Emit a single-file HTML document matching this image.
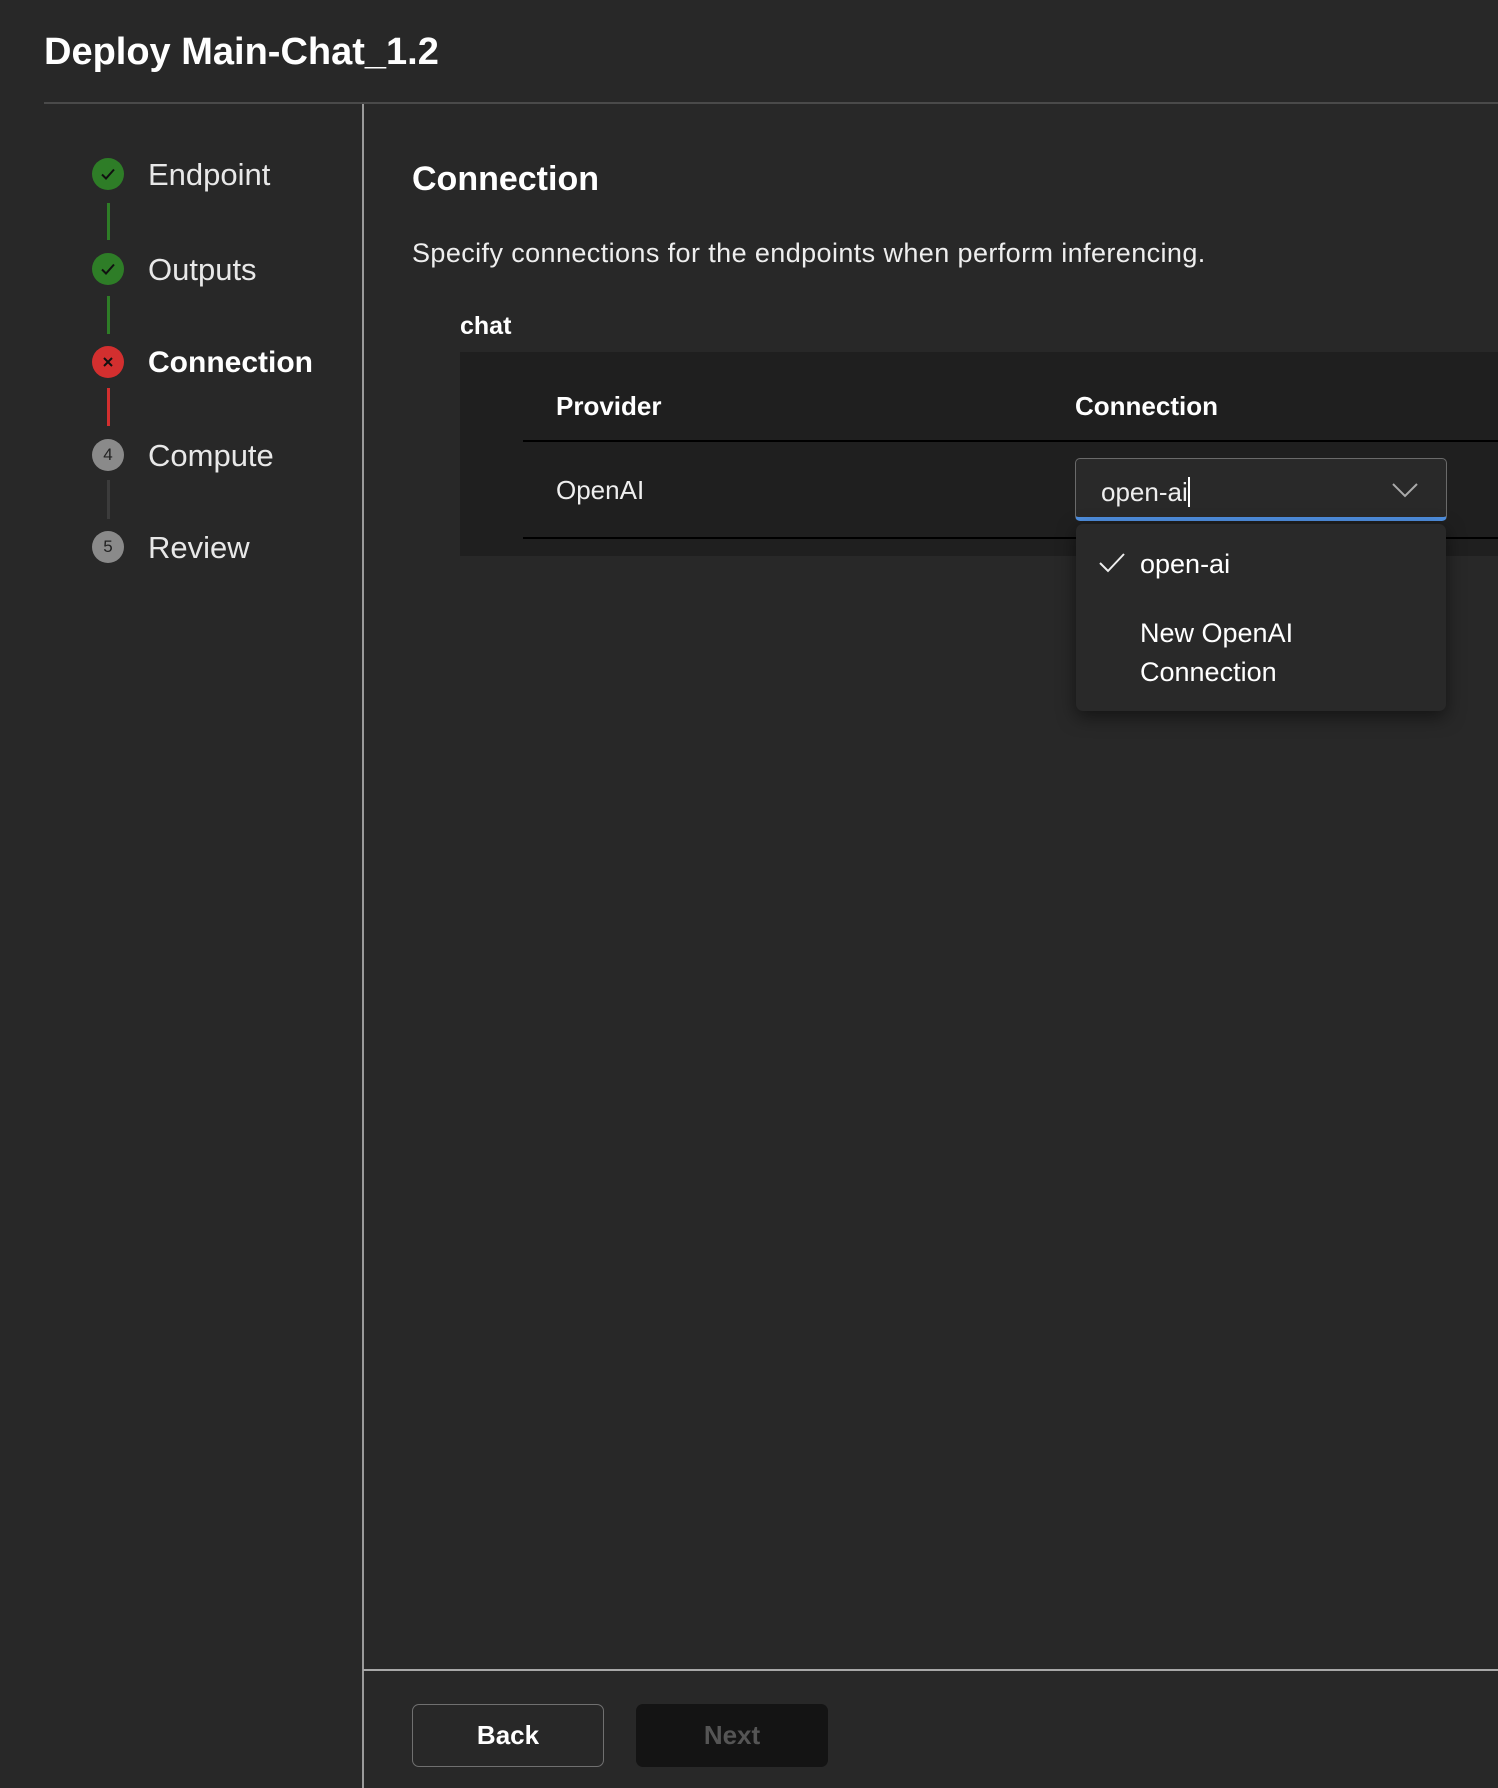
<!DOCTYPE html>
<html><head><meta charset="utf-8"><style>
*{margin:0;padding:0;box-sizing:border-box}
body{width:1498px;height:1788px;background:#282828;color:#fff;font-family:"Liberation Sans",sans-serif;position:relative;overflow:hidden}
.a{position:absolute;white-space:nowrap}
.c{position:absolute;width:32px;height:32px;border-radius:50%;left:92px;display:flex;align-items:center;justify-content:center;font-size:17px;color:#222}
.l{position:absolute;left:107px;width:3px}
.s{position:absolute;left:148px;font-size:31px;line-height:34px}
</style></head><body>
<div class="a" style="left:44px;top:30px;font-size:38px;font-weight:bold;line-height:44px">Deploy Main-Chat_1.2</div>
<div class="a" style="left:44px;top:102px;right:0;height:2px;background:#4a4a4a"></div>
<div class="a" style="left:362px;top:104px;bottom:0;width:2px;background:#9a9a9a"></div>

<div class="c" style="top:158px;background:#2e7d27"><svg width="18" height="18" viewBox="0 0 18 18"><path d="M3 9.5l4 4 8-9" fill="none" stroke="#111" stroke-width="2"/></svg></div>
<div class="l" style="top:203px;height:37px;background:#2e7d27"></div>
<div class="c" style="top:253px;background:#2e7d27"><svg width="18" height="18" viewBox="0 0 18 18"><path d="M3 9.5l4 4 8-9" fill="none" stroke="#111" stroke-width="2"/></svg></div>
<div class="l" style="top:296px;height:38px;background:#2e7d27"></div>
<div class="c" style="top:346px;background:#d32f2f"><svg width="14" height="14" viewBox="0 0 14 14"><path d="M3 3l8 8M11 3l-8 8" stroke="#111" stroke-width="2"/></svg></div>
<div class="l" style="top:388px;height:38px;background:#d32f2f"></div>
<div class="c" style="top:439px;background:#8a8a8a">4</div>
<div class="l" style="top:480px;height:39px;background:#3c3c3c"></div>
<div class="c" style="top:531px;background:#8a8a8a">5</div>

<div class="s" style="top:158px;color:#e8e8e8">Endpoint</div>
<div class="s" style="top:253px;color:#e8e8e8">Outputs</div>
<div class="s" style="top:346px;font-weight:bold;font-size:30px">Connection</div>
<div class="s" style="top:439px;color:#e8e8e8">Compute</div>
<div class="s" style="top:531px;color:#e8e8e8">Review</div>

<div class="a" style="left:412px;top:160px;font-size:34px;font-weight:bold;line-height:38px">Connection</div>
<div class="a" style="left:412px;top:237px;font-size:27px;line-height:32px;color:#eee;letter-spacing:0.4px">Specify connections for the endpoints when perform inferencing.</div>
<div class="a" style="left:460px;top:311px;font-size:25px;font-weight:bold;line-height:30px">chat</div>

<div class="a" style="left:460px;top:352px;right:0;height:204px;background:#1f1f1f"></div>
<div class="a" style="left:556px;top:391px;font-size:26px;font-weight:bold;line-height:30px">Provider</div>
<div class="a" style="left:1075px;top:391px;font-size:26px;font-weight:bold;line-height:30px">Connection</div>
<div class="a" style="left:523px;top:440px;right:0;height:2px;background:#000"></div>
<div class="a" style="left:556px;top:475px;font-size:26px;line-height:30px;color:#eee">OpenAI</div>
<div class="a" style="left:523px;top:537px;right:0;height:2px;background:#000"></div>

<div class="a" style="left:1075px;top:458px;width:372px;height:63px;background:#292929;border:1.5px solid #6a6a6a;border-bottom:4px solid #4f8fdf;border-radius:5px"></div>
<div class="a" style="left:1101px;top:477px;font-size:26px;line-height:30px;color:#eee">open-ai<span style="display:inline-block;width:2px;height:30px;background:#fff;vertical-align:-6px"></span></div>
<svg class="a" style="left:1391px;top:481px" width="28" height="18" viewBox="0 0 28 18"><path d="M2 3l12 12 12-12" fill="none" stroke="#aaa" stroke-width="2"/></svg>

<div class="a" style="left:1076px;top:524px;width:370px;height:187px;background:#292929;border-radius:7px;box-shadow:0 6px 18px rgba(0,0,0,.5)"></div>
<svg class="a" style="left:1098px;top:551px" width="28" height="24" viewBox="0 0 28 24"><path d="M2 12l8 8L26 3" fill="none" stroke="#eee" stroke-width="2"/></svg>
<div class="a" style="left:1140px;top:549px;font-size:27px;line-height:30px">open-ai</div>
<div class="a" style="left:1140px;top:614px;font-size:27px;line-height:39px">New OpenAI<br>Connection</div>

<div class="a" style="left:363px;top:1669px;right:0;height:2px;background:#a8a8a8"></div>
<div class="a" style="left:412px;top:1704px;width:192px;height:63px;border:1.5px solid #707070;border-radius:7px;display:flex;align-items:center;justify-content:center;font-size:26px;font-weight:bold">Back</div>
<div class="a" style="left:636px;top:1704px;width:192px;height:63px;background:#141414;border-radius:7px;display:flex;align-items:center;justify-content:center;font-size:26px;font-weight:bold;color:#555">Next</div>
</body></html>
